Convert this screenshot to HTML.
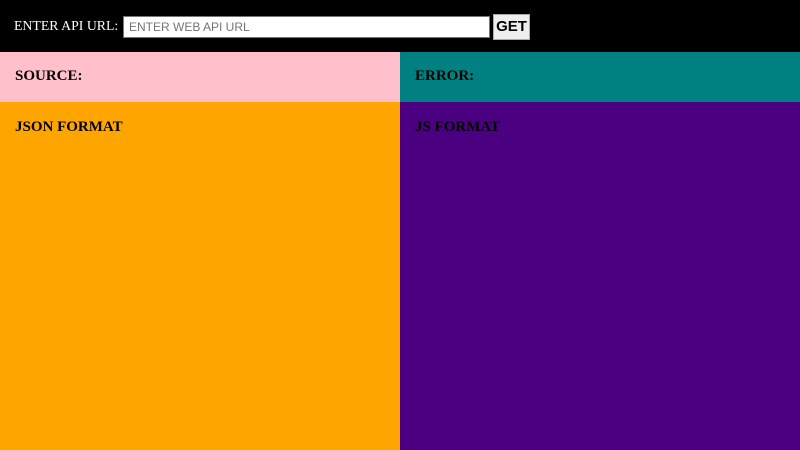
<!DOCTYPE html>
<html><head><style>
body{margin:0;width:800px;height:450px;overflow:hidden;font-family:"Liberation Serif",serif;}
.top{position:absolute;left:0;top:0;width:800px;height:52px;background:#000;}
.lbl{position:absolute;left:14px;top:18px;color:#fff;font-size:13.8px;white-space:nowrap;}
.inp{position:absolute;left:123px;top:16px;height:20px;background:#fff;border:1px solid #767676;font-family:"Liberation Sans",sans-serif;font-size:12px;color:#757575;line-height:20px;padding-left:5px;width:360px;}
.btn{position:absolute;left:493px;top:14px;width:35px;height:24px;background:#efefef;border:1px solid #aaa;font-family:"Liberation Sans",sans-serif;font-weight:bold;font-size:15px;text-align:center;line-height:24px;}
.box{position:absolute;font-weight:bold;font-size:15px;box-sizing:border-box;padding:16px 15px;}
</style></head><body>
<div class="top"><div class="lbl">ENTER API URL:</div><div class="inp">ENTER WEB API URL</div><div class="btn">GET</div></div>
<div class="box" style="left:0;top:52px;width:400px;height:50px;background:#ffc0cb;">SOURCE:</div>
<div class="box" style="left:400px;top:52px;width:400px;height:50px;background:#008080;">ERROR:</div>
<div class="box" style="left:0;top:102px;width:400px;height:348px;background:#ffa500;padding-top:17px">JSON FORMAT</div>
<div class="box" style="left:400px;top:102px;width:400px;height:348px;background:#4b0082;padding-top:17px">JS FORMAT</div>
</body></html>
